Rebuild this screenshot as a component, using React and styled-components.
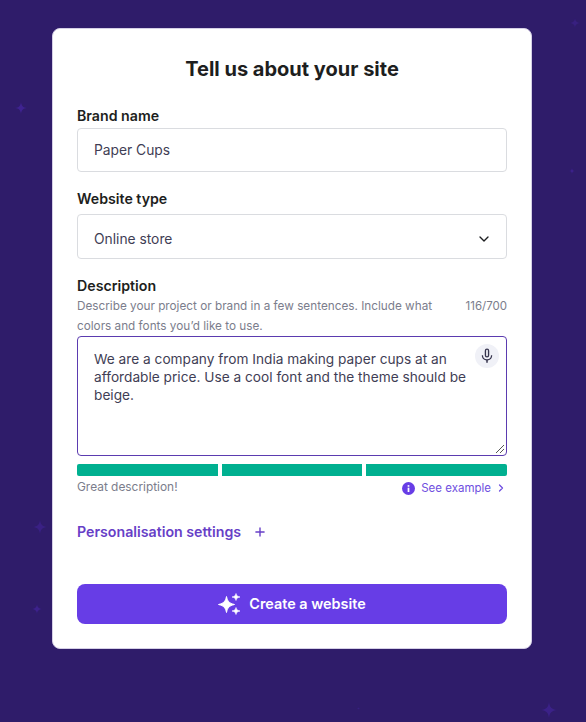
import React from "react";
import styled, { createGlobalStyle } from "styled-components";
import { ChevronDown, ChevronRight, Plus } from "lucide-react";

const GlobalStyle = createGlobalStyle`
  html, body {
    margin: 0;
    padding: 0;
    background-color: #2f1c6a;
  }
  * {
    box-sizing: border-box;
  }
`;

const Page = styled.div`
  background-color: #2f1c6a;
  font-family: Inter, "Liberation Sans", sans-serif;
  height: 722px;
  overflow: hidden;
  padding: 28px 54px 0 52px;
  position: relative;
  width: 586px;
`;

const StarMark = styled.svg`
  color: #3f2390;
  left: ${(p) => p.$x - p.$size / 2}px;
  position: absolute;
  top: ${(p) => p.$y - p.$size / 2}px;
`;

const Card = styled.main`
  background-color: #fff;
  border: 1px solid #d5cfe6;
  border-radius: 8px;
  display: flex;
  flex-direction: column;
  height: 621px;
  padding: 0 24px;
  position: relative;
  width: 480px;
`;

const Title = styled.h1`
  color: #1d1e20;
  font-size: 20px;
  font-weight: 700;
  letter-spacing: 0;
  line-height: 24px;
  margin: 28px 0 0;
  text-align: center;
`;

const Label = styled.label`
  color: #1d1e20;
  display: block;
  font-size: 14.2px;
  font-weight: 600;
  line-height: 20px;
  margin-top: ${(p) => p.$top}px;
`;

const Field = styled.div`
  align-items: center;
  background-color: #fff;
  border: 1px solid #dadce0;
  border-radius: 4px;
  color: #3f3e55;
  display: flex;
  font-size: 13.8px;
  height: ${(p) => p.$height}px;
  justify-content: space-between;
  margin-top: ${(p) => p.$top}px;
  padding: ${(p) => p.$shift}px 14px 0 16px;
`;

const HelpRow = styled.div`
  display: flex;
  justify-content: space-between;
`;

const HelpText = styled.p`
  color: #7b7d8c;
  font-size: 11.75px;
  line-height: 20px;
  margin: 0;
  width: 365px;
`;

const Counter = styled.span`
  color: #7b7d8c;
  font-size: 11.5px;
  line-height: 20px;
`;

const TextBox = styled.div`
  border: 1px solid #5b3bb0;
  border-radius: 4px;
  color: #3f3e55;
  font-size: 13.7px;
  height: 120px;
  line-height: 18px;
  margin-top: 0;
  padding: 13px 32px 0 16px;
  position: relative;
`;

const MicButton = styled.span`
  align-items: center;
  background-color: #f0f1f7;
  border-radius: 50%;
  color: #36344d;
  display: flex;
  height: 24px;
  justify-content: center;
  position: absolute;
  right: 7px;
  top: 7px;
  width: 24px;
`;

const ResizeGrip = styled.svg`
  bottom: 1px;
  position: absolute;
  right: 1px;
`;

const Strength = styled.div`
  display: grid;
  gap: 4px;
  grid-template-columns: repeat(3, 1fr);
  margin-top: 8px;
`;

const StrengthBar = styled.span`
  background-color: #00b090;
  border-radius: ${(p) => p.$radius};
  height: 12px;
`;

const HintRow = styled.div`
  align-items: flex-start;
  display: flex;
  height: 16px;
  justify-content: space-between;
  margin-top: 3px;
`;

const Hint = styled.span`
  color: #7b7d8c;
  font-size: 11.9px;
  line-height: 16px;
`;

const ExampleLink = styled.a`
  align-items: center;
  color: #6f4fe0;
  display: flex;
  font-size: 11.5px;
  gap: 4px;
  line-height: 16px;
  padding-top: 1px;
`;

const InfoMark = styled.svg`
  margin-right: 2px;
`;

const SettingsToggle = styled.div`
  align-items: center;
  color: #673fc7;
  display: flex;
  font-size: 14.2px;
  font-weight: 600;
  gap: 12px;
  line-height: 20px;
  margin-top: 27px;
`;

const CreateButton = styled.button`
  align-items: center;
  background-color: #673de6;
  border: 0;
  border-radius: 8px;
  color: #fff;
  display: flex;
  font-family: inherit;
  font-size: 14.4px;
  font-weight: 600;
  gap: 7px;
  height: 40px;
  justify-content: center;
  margin-top: 42px;
  padding: 0 0 1px;
  width: 100%;
`;

const stars = [
  { x: 21, y: 108, size: 12, opacity: 1 },
  { x: 40, y: 527, size: 14, opacity: 0.7 },
  { x: 37, y: 609, size: 10, opacity: 0.9 },
  { x: 575, y: 23, size: 10, opacity: 0.6 },
  { x: 572, y: 171, size: 6, opacity: 0.9 },
  { x: 549, y: 710, size: 16, opacity: 0.8 },
  { x: 358, y: 708, size: 3, opacity: 0.6 },
];

function Star({ x, y, size, opacity }) {
  return (
    <StarMark $x={x} $y={y} $size={size} width={size} height={size} viewBox="0 0 24 24" opacity={opacity}>
      <path fill="currentColor" d="M12 0C13 8 16 11 24 12C16 13 13 16 12 24C11 16 8 13 0 12C8 11 11 8 12 0Z" />
    </StarMark>
  );
}

function MicIcon() {
  return (
    <svg width="18" height="18" viewBox="0 0 24 24" fill="currentColor">
      <path d="M12 14a3 3 0 0 0 3-3V5a3 3 0 0 0-6 0v6a3 3 0 0 0 3 3Zm-1.2-9a1.2 1.2 0 0 1 2.4 0v6a1.2 1.2 0 0 1-2.4 0V5Z" fillRule="evenodd" />
      <path d="M17.3 11a5.3 5.3 0 0 1-10.6 0H5a7 7 0 0 0 6 6.9V21h2v-3.1a7 7 0 0 0 6-6.9h-1.7Z" />
    </svg>
  );
}

function InfoIcon() {
  return (
    <InfoMark width="13" height="13" viewBox="0 0 24 24">
      <circle cx="12" cy="12" r="12" fill="#673de6" />
      <rect x="10.4" y="10.5" width="3.2" height="8" fill="#fff" />
      <rect x="10.4" y="5.8" width="3.2" height="3" fill="#fff" />
    </InfoMark>
  );
}

function SparkleIcon() {
  return (
    <svg width="24" height="24" viewBox="0 0 24 24" fill="#fff">
      <path d="M8.5 4.5C9.6 9.4 11 11.2 16.5 12.5C11 13.8 9.6 15.6 8.5 20.5C7.4 15.6 6 13.8 0.5 12.5C6 11.2 7.4 9.4 8.5 4.5Z" strokeLinejoin="round" stroke="#fff" />
      <path d="M18 1.5C18.5 3.8 19.4 4.6 22 5C19.4 5.4 18.5 6.2 18 8.5C17.5 6.2 16.6 5.4 14 5C16.6 4.6 17.5 3.8 18 1.5Z" strokeLinejoin="round" stroke="#fff" strokeWidth="0.6" />
      <path d="M18 15.5C18.5 17.8 19.4 18.6 22 19C19.4 19.4 18.5 20.2 18 22.5C17.5 20.2 16.6 19.4 14 19C16.6 18.6 17.5 17.8 18 15.5Z" strokeLinejoin="round" stroke="#fff" strokeWidth="0.6" />
    </svg>
  );
}

export default function App() {
  return (
    <Page>
      <GlobalStyle />
      {stars.map((star) => (
        <Star key={`${star.x}-${star.y}`} {...star} />
      ))}
      <Card>
        <Title>Tell us about your site</Title>
        <Label $top={25}>Brand name</Label>
        <Field $height={44} $top={2} $shift={0}>Paper Cups</Field>
        <Label $top={17}>Website type</Label>
        <Field $height={45} $top={5} $shift={4}>
          Online store
          <ChevronDown size={16} strokeWidth={2} color="#1d1e20" />
        </Field>
        <Label $top={17}>Description</Label>
        <HelpRow>
          <HelpText>Describe your project or brand in a few sentences. Include what colors and fonts you’d like to use.</HelpText>
          <Counter>116/700</Counter>
        </HelpRow>
        <TextBox>
          We are a company from India making paper cups at an affordable price. Use a cool font and the theme should be beige.
          <MicButton>
            <MicIcon />
          </MicButton>
          <ResizeGrip width="10" height="10" viewBox="0 0 10 10" stroke="#555" strokeWidth="1">
            <path d="M1 9L9 1M5 9L9 5" />
          </ResizeGrip>
        </TextBox>
        <Strength>
          <StrengthBar $radius="2px 0 0 2px" />
          <StrengthBar $radius="0" />
          <StrengthBar $radius="0 2px 2px 0" />
        </Strength>
        <HintRow>
          <Hint>Great description!</Hint>
          <ExampleLink>
            <InfoIcon />
            See example
            <ChevronRight size={12} strokeWidth={2.5} />
          </ExampleLink>
        </HintRow>
        <SettingsToggle>
          Personalisation settings
          <Plus size={14} strokeWidth={2.4} />
        </SettingsToggle>
        <CreateButton>
          <SparkleIcon />
          Create a website
        </CreateButton>
      </Card>
    </Page>
  );
}
